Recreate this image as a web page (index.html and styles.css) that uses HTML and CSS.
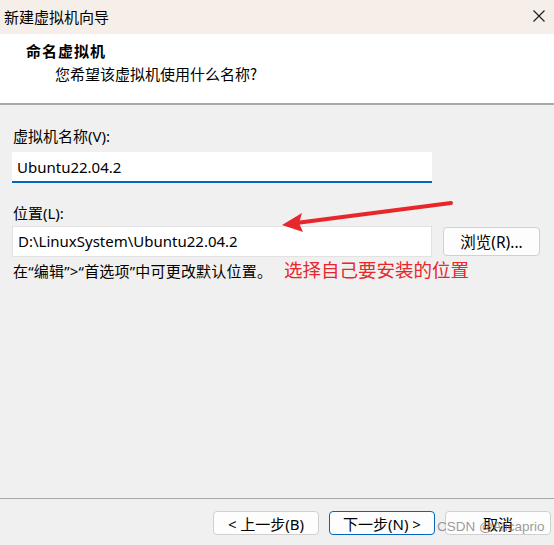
FILE: index.html
```html
<!DOCTYPE html>
<html lang="zh-CN">
<head>
    <meta charset="UTF-8">
    <meta name="viewport" content="width=device-width, initial-scale=1.0">
    <title>新建虚拟机向导</title>
    <link rel="stylesheet" href="styles.css">
</head>
<body>
    <div class="window">
        <div class="titlebar">
            <span class="title">新建虚拟机向导</span>
            <svg class="close" width="12" height="12" viewBox="0 0 12 12">
                <path d="M0.5 0.5 L11.5 11.5 M11.5 0.5 L0.5 11.5" stroke="#1a1a1a" stroke-width="1.1" fill="none"/>
            </svg>
        </div>
        <div class="header">
            <div class="head-title">命名虚拟机</div>
            <div class="head-sub">您希望该虚拟机使用什么名称?</div>
        </div>
        <div class="content">
            <div class="field-label">虚拟机名称(V):</div>
            <div class="textbox focused">Ubuntu22.04.2</div>
            <div class="field-label second">位置(L):</div>
            <div class="path-row">
                <div class="textbox">D:\LinuxSystem\Ubuntu22.04.2</div>
                <button class="btn browse">浏览(R)...</button>
            </div>
            <div class="hint">在“编辑”&gt;“首选项”中可更改默认位置。</div>

            <!-- red annotation drawn over the form -->
            <svg class="arrow" width="180" height="40" viewBox="0 0 180 40">
                <path d="M171 8 L16 28" stroke="#e8262b" stroke-width="4" stroke-linecap="round" fill="none"/>
                <path d="M2 30 L22 18 L19 28 L23 37 Z" fill="#e8262b"/>
            </svg>
            <div class="note">选择自己要安装的位置</div>
        </div>
        <div class="footer">
            <button class="btn">&lt; 上一步(B)</button>
            <button class="btn primary">下一步(N) &gt;</button>
            <button class="btn">取消</button>
            <span class="watermark">CSDN @Alicaprio</span>
        </div>
    </div>
</body>
</html>
```

FILE: styles.css
```css
body {
    margin: 0;
    font-family: "Noto Sans", "Noto Sans CJK SC", sans-serif;
    font-size: 15px;
    color: #000;
}
.window {
    width: 554px;
    height: 545px;
    display: flex;
    flex-direction: column;
    background: #f0f0f0;
    position: relative;
    overflow: hidden;
}
.titlebar {
    height: 34px;
    flex: none;
    display: flex;
    align-items: center;
    justify-content: space-between;
    padding: 0 9px 0 4px;
    background: #f6efe9;
}
.title {
    font-family: "Noto Sans CJK SC", sans-serif;
    font-size: 15px;
    line-height: 20px;
}
.close {
    margin-top: -3px;
}
.header {
    height: 71px;
    flex: none;
    box-sizing: border-box;
    padding: 7px 0 0 26px;
    background: #fff;
    border-bottom: 2px solid #a8a8a8;
}
.head-title {
    font-family: "Noto Sans CJK SC", sans-serif;
    font-weight: bold;
    line-height: 20px;
    letter-spacing: 1px;
}
.head-sub {
    font-family: "Noto Sans CJK SC", sans-serif;
    line-height: 20px;
    margin: 3px 0 0 29px;
}
.content {
    flex: 1;
    position: relative;
    padding: 21px 0 0 12px;
}
.field-label {
    line-height: 20px;
    margin: 0 0 6px 1px;
}
.field-label.second {
    margin-top: 20px;
    margin-bottom: 3px;
}
.textbox {
    width: 420px;
    height: 31px;
    box-sizing: border-box;
    padding-left: 5px;
    line-height: 29px;
    background: #fff;
    border: 1px solid #e2e2e2;
}
.textbox.focused {
    border: none;
    border-bottom: 2px solid #0067c0;
    line-height: 30px;
}
.path-row {
    display: flex;
    align-items: center;
    gap: 11px;
}
.btn {
    font-family: "Noto Sans", "Noto Sans CJK SC", sans-serif;
    font-size: 15px;
    color: #000;
    background: #fdfdfd;
    border: 1px solid #d0d0d0;
    border-radius: 4px;
    padding: 0;
    height: 24px;
    width: 106px;
}
.btn.browse {
    width: 97px;
    height: 29px;
    font-size: 15.5px;
}
.btn.primary {
    border-color: #0067c0;
}
.hint {
    line-height: 20px;
    margin: 4px 0 0 1px;
    letter-spacing: 0.2px;
}
.arrow {
    position: absolute;
    left: 280px;
    top: 90px;
}
.note {
    position: absolute;
    left: 284px;
    top: 152px;
    font-family: "Noto Sans CJK SC", sans-serif;
    font-size: 18.5px;
    line-height: 24px;
    color: #e8262b;
    white-space: nowrap;
}
.footer {
    height: 47px;
    flex: none;
    box-sizing: border-box;
    border-top: 1px solid #a8a8a8;
    display: flex;
    justify-content: flex-end;
    gap: 10px;
    padding: 12px 3px 0 0;
    position: relative;
}
.watermark {
    position: absolute;
    left: 437px;
    top: 20px;
    font-family: "Liberation Sans", sans-serif;
    font-size: 13.5px;
    white-space: nowrap;
    color: rgba(120, 120, 120, 0.75);
}
```
